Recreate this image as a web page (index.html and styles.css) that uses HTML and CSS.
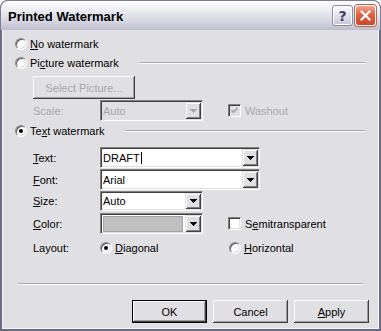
FILE: index.html
```html
<!DOCTYPE html>
<html>
<head>
<meta charset="utf-8">
<link rel="stylesheet" href="styles.css">
</head>
<body>
<div class="window">
  <div class="titlebar">
    <span class="title">Printed Watermark</span>
    <span class="tbtn help">?</span>
    <span class="tbtn close"><svg width="11" height="11" viewBox="0 0 11 11"><path d="M1.5 1.5L9.5 9.5M9.5 1.5L1.5 9.5" stroke="#fff" stroke-width="2.2" stroke-linecap="square"/></svg></span>
  </div>
  <div class="client">
    <div class="row r1"><span class="radio"></span><span class="lbl"><u>N</u>o watermark</span></div>
    <div class="row r2"><span class="radio"></span><span class="lbl w110">Pi<u>c</u>ture watermark</span><span class="line"></span></div>
    <div class="row r3"><span class="btn sel">Select Picture...</span></div>
    <div class="row r4">
      <span class="flabel dis">Scale:</span>
      <span class="combo short dis"><span class="val">Auto</span><span class="arrow"><svg width="7" height="4" viewBox="0 0 7 4"><path d="M0 0h7v1h-1v1h-1v1h-1v1h-1v-1h-1v-1h-1v-1h-1z"/></svg></span></span>
      <span class="check dis"><svg width="9" height="9" viewBox="0 0 9 9"><polyline points="1.5,4 3.5,6.2 7.5,2" fill="none" stroke="#a7a6aa" stroke-width="1.8"/></svg></span>
      <span class="ctext dis">Washout</span>
    </div>
    <div class="row r5"><span class="radio on"></span><span class="lbl w95">Te<u>x</u>t watermark</span><span class="line"></span></div>
    <div class="row r6">
      <span class="flabel"><u>T</u>ext:</span>
      <span class="combo long"><span class="val">DRAFT<span class="caret"></span></span><span class="arrow"><svg width="7" height="4" viewBox="0 0 7 4"><path d="M0 0h7v1h-1v1h-1v1h-1v1h-1v-1h-1v-1h-1v-1h-1z"/></svg></span></span>
    </div>
    <div class="row r7">
      <span class="flabel"><u>F</u>ont:</span>
      <span class="combo long"><span class="val">Arial</span><span class="arrow"><svg width="7" height="4" viewBox="0 0 7 4"><path d="M0 0h7v1h-1v1h-1v1h-1v1h-1v-1h-1v-1h-1v-1h-1z"/></svg></span></span>
    </div>
    <div class="row r8">
      <span class="flabel"><u>S</u>ize:</span>
      <span class="combo short"><span class="val">Auto</span><span class="arrow"><svg width="7" height="4" viewBox="0 0 7 4"><path d="M0 0h7v1h-1v1h-1v1h-1v1h-1v-1h-1v-1h-1v-1h-1z"/></svg></span></span>
    </div>
    <div class="row r9">
      <span class="flabel"><u>C</u>olor:</span>
      <span class="combo short"><span class="swatch"></span><span class="arrow"><svg width="7" height="4" viewBox="0 0 7 4"><path d="M0 0h7v1h-1v1h-1v1h-1v1h-1v-1h-1v-1h-1v-1h-1z"/></svg></span></span>
      <span class="check"></span>
      <span class="ctext">S<u>e</u>mitransparent</span>
    </div>
    <div class="row r10">
      <span class="flabel">Layout:</span>
      <span class="opt"><span class="radio on"></span><span class="lbl"><u>D</u>iagonal</span></span>
      <span class="radio"></span><span class="lbl"><u>H</u>orizontal</span>
    </div>
    <div class="sep"></div>
    <div class="row buttons">
      <span class="btn def">OK</span>
      <span class="btn">Cancel</span>
      <span class="btn"><span><u>A</u>pply</span></span>
    </div>
  </div>
</div>
</body>
</html>
```

FILE: styles.css
```css
body {
  margin: 0;
  background: #ffffff;
}

.window {
  width: 381px;
  height: 331px;
  box-sizing: border-box;
  background: #6a6a86;
  border-radius: 8px 8px 0 0;
  display: flex;
  flex-direction: column;
  overflow: hidden;
  font-family: "Liberation Sans", Arial, sans-serif;
  font-size: 11px;
  color: #000;
}

.titlebar {
  height: 30px;
  flex: none;
  box-sizing: border-box;
  display: flex;
  align-items: center;
  padding: 0 4px 0 7px;
  border: 1px solid #7d7d98;
  border-bottom: 0;
  border-radius: 8px 8px 0 0;
  background: linear-gradient(to bottom, #ffffff 0%, #f4f4f8 18%, #e4e4ec 45%, #d2d2df 75%, #bdbdcf 100%);
}

.title {
  flex: 1;
  font-weight: bold;
  font-size: 13px;
  color: #000;
  padding-top: 2px;
}

.tbtn {
  width: 21px;
  height: 21px;
  box-sizing: border-box;
  border-radius: 3px;
  display: flex;
  align-items: center;
  justify-content: center;
  margin-left: 2px;
}

.help {
  border: 1px solid #8a8aa3;
  box-shadow: inset 0 0 0 1px #ffffff;
  background: linear-gradient(to bottom, #fcfcfe, #e2e2ec 50%, #c5c5d6);
  color: #3e3e5e;
  font-family: "DejaVu Sans", sans-serif;
  font-weight: bold;
  font-size: 14px;
}

.close {
  border: 1px solid #ffffff;
  box-shadow: 0 0 0 1px #b9664f;
  background: linear-gradient(to bottom, #f2a58f, #e2613f 45%, #cf4527);
}

.client {
  flex: 1;
  margin: 0 2px 2px;
  background: #e0dfe3;
  border: 1px solid #f7f7fb;
  border-top: 0;
  padding: 6px 9px 0 13px;
  display: flex;
  flex-direction: column;
}

.row {
  display: flex;
  align-items: center;
  flex: none;
}

.r1 { height: 16px; }
.r2 { height: 16px; margin-top: 3px; }
.r3 { height: 23px; margin-top: 5px; }
.r4 { height: 21px; margin-top: 1px; }
.r5 { height: 16px; margin-top: 2px; }
.r6 { height: 21px; margin-top: 8px; }
.r7 { height: 21px; margin-top: 1px; }
.r8 { height: 20px; margin-top: 1px; }
.r9 { height: 21px; margin-top: 2px; }
.r10 { height: 16px; margin-top: 6px; }

.radio {
  width: 12px;
  height: 12px;
  box-sizing: border-box;
  border-radius: 50%;
  background: #ffffff;
  border: 1px solid;
  border-color: #8a8a8e #ffffff #ffffff #8a8a8e;
  box-shadow: inset 1px 1px #5a5a5e, inset -1px -1px #dcdbe0;
  margin-right: 3px;
  flex: none;
  display: flex;
  align-items: center;
  justify-content: center;
}

.r1 .radio, .r2 .radio, .r5 .radio {
  margin-left: -1px;
}

.radio.on::after {
  content: "";
  width: 4px;
  height: 4px;
  border-radius: 50%;
  background: #000;
}

.lbl {
  white-space: nowrap;
}

.w110 { width: 110px; flex: none; }
.w95 { width: 95px; flex: none; }

.line {
  flex: 1;
  height: 0;
  border-top: 1px solid #a7a6aa;
  border-bottom: 1px solid #ffffff;
  margin-right: 4px;
}

.flabel {
  width: 67px;
  margin-left: 17px;
  flex: none;
}

.dis {
  color: #a7a6aa;
}

.btn {
  box-sizing: border-box;
  width: 75px;
  height: 23px;
  flex: none;
  display: flex;
  align-items: center;
  justify-content: center;
  background: #e0dfe3;
  box-shadow: inset -1px -1px #404040, inset 1px 1px #ffffff, inset -2px -2px #9d9da1, inset 2px 2px #e0dfe3;
}

.btn.def {
  border: 1px solid #000;
}

.btn.sel {
  width: 102px;
  margin-left: 17px;
  color: #a7a6aa;
}

.combo {
  box-sizing: border-box;
  height: 100%;
  display: flex;
  align-items: stretch;
  background: #ffffff;
  border: 1px solid;
  border-color: #808080 #ffffff #ffffff #808080;
  box-shadow: inset 1px 1px #404040, inset -1px -1px #e0dfe3;
  padding: 1px;
  flex: none;
}

.combo.long { width: 160px; }
.combo.short { width: 103px; }

.combo.dis {
  background: #e0dfe3;
}

.val {
  flex: 1;
  display: flex;
  align-items: center;
  padding-left: 1px;
  white-space: nowrap;
}

.caret {
  display: inline-block;
  width: 1px;
  height: 12px;
  background: #000;
  margin-left: 1px;
}

.arrow {
  width: 16px;
  flex: none;
  box-sizing: border-box;
  background: #e0dfe3;
  display: flex;
  align-items: center;
  justify-content: center;
  box-shadow: inset 1px 1px #e0dfe3, inset -1px -1px #404040, inset 2px 2px #ffffff, inset -2px -2px #808080;
}

.arrow svg {
  fill: #000;
}

.combo.dis .arrow svg {
  fill: #a7a6aa;
}

.swatch {
  flex: 1;
  margin: 1px 2px 0 1px;
  background: #c0c0c0;
  border: 1px solid #a4a4a4;
}

.check {
  width: 13px;
  height: 13px;
  box-sizing: border-box;
  background: #ffffff;
  border: 1px solid;
  border-color: #808080 #ffffff #ffffff #808080;
  box-shadow: inset 1px 1px #404040, inset -1px -1px #e0dfe3;
  margin-left: 25px;
  margin-right: 4px;
  flex: none;
  display: flex;
  align-items: center;
  justify-content: center;
}

.check.dis {
  background: #e0dfe3;
}

.ctext {
  white-space: nowrap;
}

.opt {
  width: 129px;
  flex: none;
  display: flex;
  align-items: center;
}

.sep {
  flex: none;
  height: 0;
  border-top: 1px solid #a7a6aa;
  border-bottom: 1px solid #ffffff;
  margin: 27px 6px 0 2px;
}

.buttons {
  margin-top: 15px;
  justify-content: flex-end;
  gap: 6px;
}
```
